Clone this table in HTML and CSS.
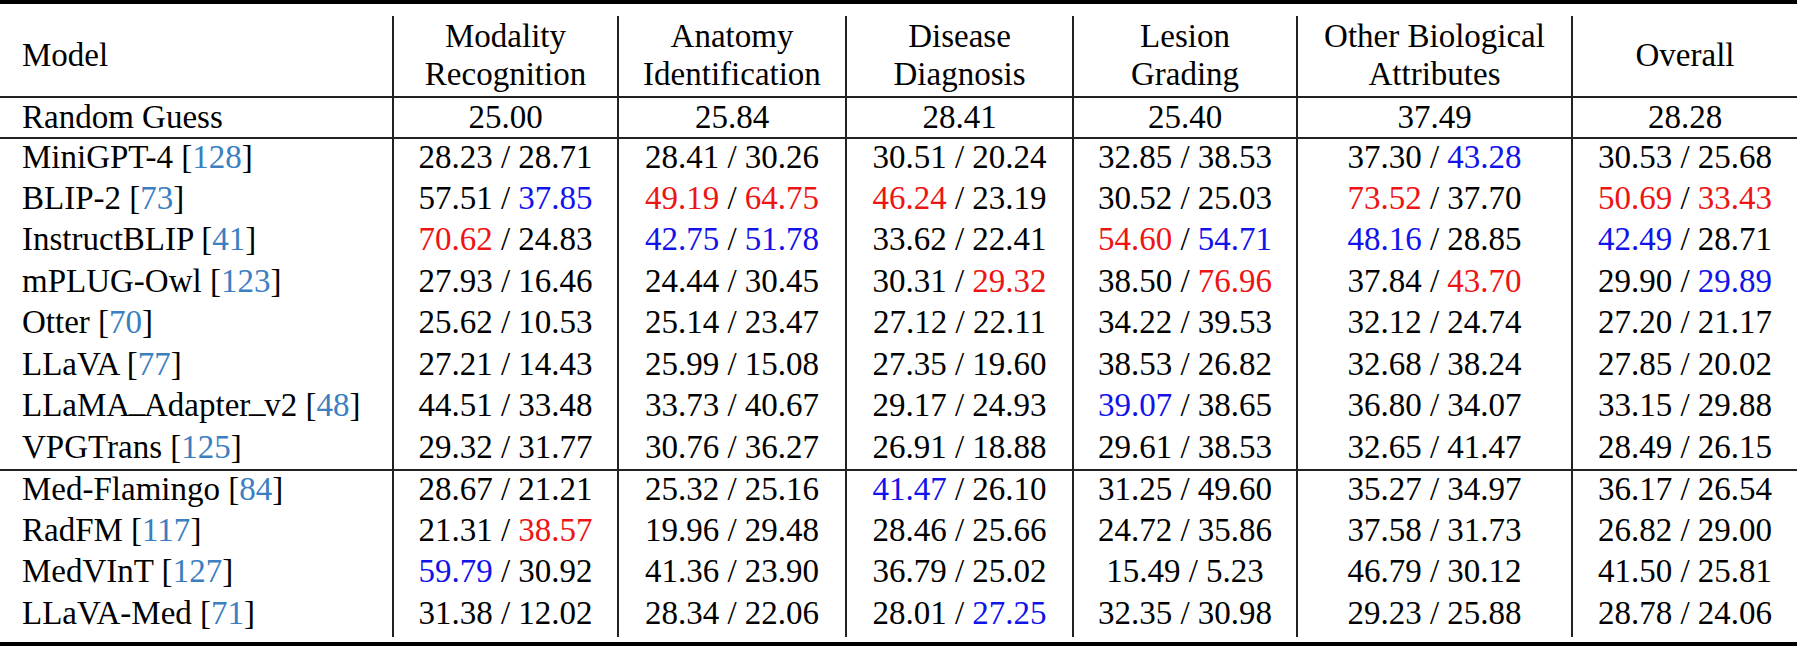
FILE: index.html
```html
<!DOCTYPE html>
<html>
<head>
<meta charset="utf-8">
<link rel="stylesheet" href="styles.css">
</head>
<body>
<div class="wrap">
  <div class="heavy"></div>
  <div class="gap-top"></div>
  <table class="tbl">
    <colgroup>
      <col class="c-model"><col class="c-a"><col class="c-b"><col class="c-c"><col class="c-d"><col class="c-e"><col class="c-f">
    </colgroup>
    <thead>
      <tr class="head">
        <th class="name">Model</th>
        <th>Modality<br>Recognition</th>
        <th>Anatomy<br>Identification</th>
        <th>Disease<br>Diagnosis</th>
        <th>Lesion<br>Grading</th>
        <th>Other Biological<br>Attributes</th>
        <th>Overall</th>
      </tr>
    </thead>
    <tbody class="grp-rand">
      <tr class="rand">
        <td class="name">Random Guess</td>
        <td>25.00</td><td>25.84</td><td>28.41</td><td>25.40</td><td>37.49</td><td>28.28</td>
      </tr>
    </tbody>
    <tbody class="grp-gen">
      <tr><td class="name">MiniGPT-4 [<span class="cite">128</span>]</td><td>28.23 / 28.71</td><td>28.41 / 30.26</td><td>30.51 / 20.24</td><td>32.85 / 38.53</td><td>37.30 / <span class="b">43.28</span></td><td>30.53 / 25.68</td></tr>
      <tr><td class="name">BLIP-2 [<span class="cite">73</span>]</td><td>57.51 / <span class="b">37.85</span></td><td><span class="r">49.19</span> / <span class="r">64.75</span></td><td><span class="r">46.24</span> / 23.19</td><td>30.52 / 25.03</td><td><span class="r">73.52</span> / 37.70</td><td><span class="r">50.69</span> / <span class="r">33.43</span></td></tr>
      <tr><td class="name">InstructBLIP [<span class="cite">41</span>]</td><td><span class="r">70.62</span> / 24.83</td><td><span class="b">42.75</span> / <span class="b">51.78</span></td><td>33.62 / 22.41</td><td><span class="r">54.60</span> / <span class="b">54.71</span></td><td><span class="b">48.16</span> / 28.85</td><td><span class="b">42.49</span> / 28.71</td></tr>
      <tr><td class="name">mPLUG-Owl [<span class="cite">123</span>]</td><td>27.93 / 16.46</td><td>24.44 / 30.45</td><td>30.31 / <span class="r">29.32</span></td><td>38.50 / <span class="r">76.96</span></td><td>37.84 / <span class="r">43.70</span></td><td>29.90 / <span class="b">29.89</span></td></tr>
      <tr><td class="name">Otter [<span class="cite">70</span>]</td><td>25.62 / 10.53</td><td>25.14 / 23.47</td><td>27.12 / 22.11</td><td>34.22 / 39.53</td><td>32.12 / 24.74</td><td>27.20 / 21.17</td></tr>
      <tr><td class="name">LLaVA [<span class="cite">77</span>]</td><td>27.21 / 14.43</td><td>25.99 / 15.08</td><td>27.35 / 19.60</td><td>38.53 / 26.82</td><td>32.68 / 38.24</td><td>27.85 / 20.02</td></tr>
      <tr><td class="name">LLaMA<span class="us">_</span>Adapter<span class="us">_</span>v2 [<span class="cite">48</span>]</td><td>44.51 / 33.48</td><td>33.73 / 40.67</td><td>29.17 / 24.93</td><td><span class="b">39.07</span> / 38.65</td><td>36.80 / 34.07</td><td>33.15 / 29.88</td></tr>
      <tr><td class="name">VPGTrans [<span class="cite">125</span>]</td><td>29.32 / 31.77</td><td>30.76 / 36.27</td><td>26.91 / 18.88</td><td>29.61 / 38.53</td><td>32.65 / 41.47</td><td>28.49 / 26.15</td></tr>
    </tbody>
    <tbody class="grp-med">
      <tr><td class="name">Med-Flamingo [<span class="cite">84</span>]</td><td>28.67 / 21.21</td><td>25.32 / 25.16</td><td><span class="b">41.47</span> / 26.10</td><td>31.25 / 49.60</td><td>35.27 / 34.97</td><td>36.17 / 26.54</td></tr>
      <tr><td class="name">RadFM [<span class="cite">117</span>]</td><td>21.31 / <span class="r">38.57</span></td><td>19.96 / 29.48</td><td>28.46 / 25.66</td><td>24.72 / 35.86</td><td>37.58 / 31.73</td><td>26.82 / 29.00</td></tr>
      <tr><td class="name">MedVInT [<span class="cite">127</span>]</td><td><span class="b">59.79</span> / 30.92</td><td>41.36 / 23.90</td><td>36.79 / 25.02</td><td>15.49 / 5.23</td><td>46.79 / 30.12</td><td>41.50 / 25.81</td></tr>
      <tr><td class="name">LLaVA-Med [<span class="cite">71</span>]</td><td>31.38 / 12.02</td><td>28.34 / 22.06</td><td>28.01 / <span class="b">27.25</span></td><td>32.35 / 30.98</td><td>29.23 / 25.88</td><td>28.78 / 24.06</td></tr>
    </tbody>
  </table>
  <div class="gap-bottom"></div>
  <div class="heavy heavy-bottom"></div>
</div>
</body>
</html>
```

FILE: styles.css
```css
html, body {
  margin: 0;
  padding: 0;
  background: #ffffff;
}

body {
  font-family: "Liberation Serif", "Times New Roman", serif;
  font-size: 33px;
  color: #000000;
}

.wrap {
  width: 1797px;
}

.heavy {
  height: 4px;
  background: #000000;
}

.gap-top {
  height: 12px;
}

.gap-bottom {
  height: 5px;
}

.tbl {
  width: 1797px;
  table-layout: fixed;
  border-collapse: collapse;
  border-spacing: 0;
}

.c-model { width: 393px; }
.c-a { width: 225px; }
.c-b { width: 228px; }
.c-c { width: 227px; }
.c-d { width: 224px; }
.c-e { width: 275px; }
.c-f { width: 225px; }

.tbl th,
.tbl td {
  padding: 0;
  text-align: center;
  white-space: nowrap;
  font-weight: normal;
  border-left: 2px solid #222222;
}

.tbl th.name,
.tbl td.name {
  text-align: left;
  padding-left: 22px;
  border-left: none;
}

.head {
  height: 81px;
}

.head th {
  line-height: 38px;
  padding-bottom: 2px;
  vertical-align: middle;
  border-bottom: 2px solid #222222;
}

.rand {
  height: 41px;
}

.rand td {
  line-height: 38.5px;
  vertical-align: top;
  border-bottom: 2px solid #222222;
}

.grp-gen tr,
.grp-med tr {
  height: 41.56px;
}

.grp-gen td,
.grp-med td {
  line-height: 37.3px;
  vertical-align: top;
}

.grp-gen tr:last-child td {
  border-bottom: 2px solid #222222;
}

.cite {
  color: #3b7fc0;
}

.r {
  color: #ee1414;
}

.b {
  color: #1212ea;
}

.us {
  position: relative;
  top: -0.12em;
  margin: 0 -0.04em;
}
```
